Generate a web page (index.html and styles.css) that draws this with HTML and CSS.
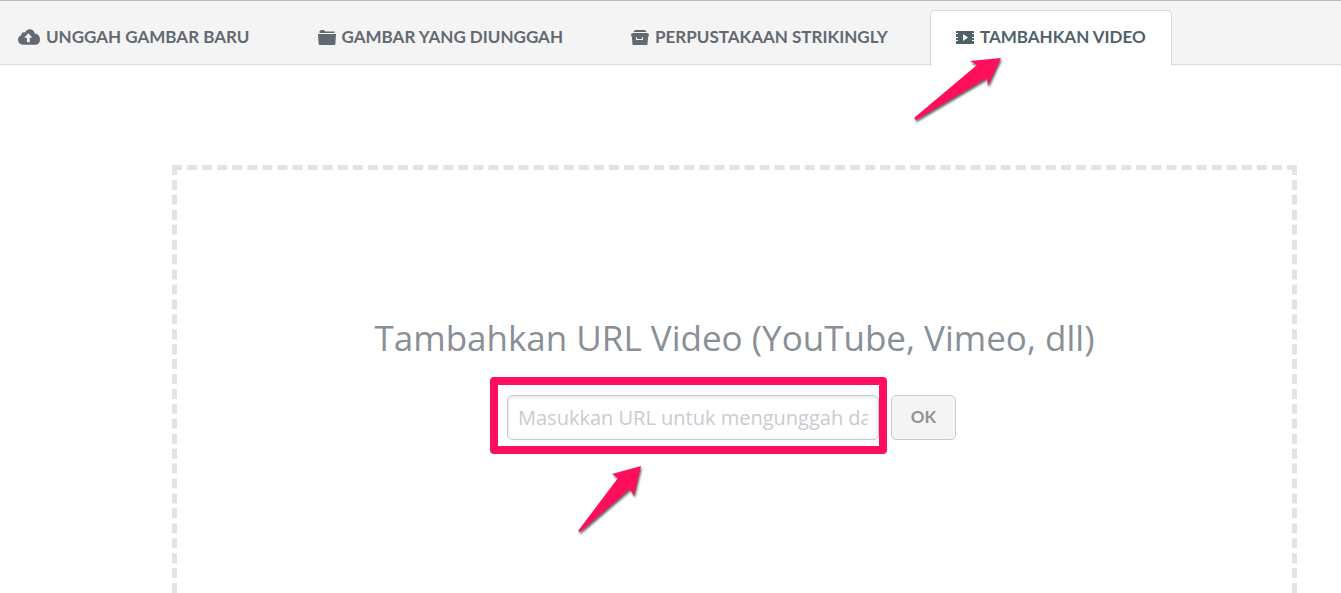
FILE: index.html
```html
<!DOCTYPE html>
<html lang="id">
<head>
<meta charset="utf-8">
<title>Tambahkan Video</title>
<link rel="stylesheet" href="styles.css">
</head>
<body>
<nav class="tabs">
  <a class="tab" href="#unggah">
    <svg class="icon icon-cloud" viewBox="0 0 23 16" aria-hidden="true"><path fill="currentColor" fill-rule="evenodd" d="M5 16a5 5 0 0 1-5-5c0-2.300 1.300-4 3.300-4.700C3.400 4.300 4.700 3 6.400 3c.4 0 .8.100 1.200.2C8.400 1.200 10 0 12.200 0c2.800 0 5 2 5.300 4.700C20.700 4.500 23 7.200 23 10.500c0 3.200-2 5.500-5 5.500zM10.800 4 6.500 8.700h2.800v4.800h3V8.700h2.800z"/></svg>
    <span>UNGGAH GAMBAR BARU</span>
  </a>
  <a class="tab" href="#gambar">
    <svg class="icon" viewBox="0 0 18 16" aria-hidden="true"><path fill="currentColor" d="M1.500 4V2L3 1h3l1.500 1.500h9V4z"/><path fill="currentColor" d="M0 5h18l-.6 10-.8 1H1.400l-.8-1z"/></svg>
    <span>GAMBAR YANG DIUNGGAH</span>
  </a>
  <a class="tab" href="#perpustakaan">
    <svg class="icon" viewBox="0 0 18 16" aria-hidden="true"><path fill="currentColor" d="M4 1h10l1.500 2h-13z"/><path fill="currentColor" fill-rule="evenodd" d="M0 5l2-1h14l2 1-.3 2H.3zM.7 7h16.600l-.9 9H1.600zM5 8v3h7V8h-1v2H6V8z"/></svg>
    <span>PERPUSTAKAAN STRIKINGLY</span>
  </a>
  <a class="tab tab-active" href="#video" aria-current="page">
    <svg class="icon" viewBox="0 0 18 16" aria-hidden="true"><path fill="currentColor" fill-rule="evenodd" d="M0 2h18v2h-2v1h2v3h-2v1h2v2h-2v1h2v3H0v-3h2v-1H0V9h2V8H0V5h2V4H0zM7 5v7l5-3.500z"/></svg>
    <span>TAMBAHKAN VIDEO</span>
    <svg class="pointer pointer-tab" viewBox="0 0 90 66" aria-hidden="true"><path fill="#ff0f5b" d="M88 1 75 29 74 21 3 63 1 61 64 8 57 4z"/></svg>
  </a>
</nav>
<main class="dropzone">
  <h1 class="title"><label for="url">Tambahkan URL Video (YouTube, Vimeo, dll)</label></h1>
  <form class="url-form">
    <div class="field">
      <input class="url-input" id="url" type="text" placeholder="Masukkan URL untuk mengunggah dari web">
      <div class="highlight"></div>
      <svg class="pointer pointer-field" viewBox="0 0 66 70" aria-hidden="true"><path fill="#ff0f5b" d="M64 1 57 31 53 24 3 67 1 66 41 13 35 9z"/></svg>
    </div>
    <button class="ok" type="button">OK</button>
  </form>
</main>
</body>
</html>
```
FILE: styles.css
```css
* {
  box-sizing: border-box;
}

body {
  display: flex;
  flex-direction: column;
  height: 100vh;
  margin: 0;
  background: #fff;
  font-family: "Open Sans", sans-serif;
  overflow: hidden;
}

.tabs {
  display: flex;
  flex: none;
  gap: 16px;
  height: 65px;
  padding: 9px 0 0;
  margin: 0;
  background: #f4f4f4;
  border-top: 1px solid #bbb;
  border-bottom: 1px solid #d8d9da;
}

.tab {
  position: relative;
  display: flex;
  flex: none;
  align-items: center;
  gap: 6px;
  height: 56px;
  padding: 0 25px 4px;
  border: 1px solid transparent;
  border-bottom: 0;
  border-radius: 5px 5px 0 0;
  color: #636972;
  font: bold 17px/24px Lato, sans-serif;
  text-decoration: none;
  white-space: nowrap;
}

.tab:first-child {
  margin-left: -8px;
}

.tab-active {
  background: #fff;
  border-color: #d8d9da;
  color: #50616b;
}

.icon {
  width: 18px;
  height: 16px;
}

.icon-cloud {
  width: 22px;
}

.pointer {
  position: absolute;
  z-index: 1;
  filter: drop-shadow(1px 2px 1px rgba(0, 0, 0, 0.6));
}

.pointer-tab {
  top: 46px;
  left: -18px;
  width: 90px;
}

.dropzone {
  flex: 1;
  margin: 100px 44px 0 172px;
  padding: 144px 20px 0;
  border: 5px dashed #e2e3e7;
  border-bottom: 0;
}

.title {
  margin: 0;
  color: #888f97;
  font-size: 35px;
  font-weight: normal;
  line-height: 48px;
  text-align: center;
}

.url-form {
  display: flex;
  justify-content: center;
  gap: 12px;
  margin-top: 33px;
  padding-right: 6px;
}

.field {
  position: relative;
}

.url-input {
  display: block;
  width: 372px;
  height: 45px;
  padding: 0 10px;
  border: 1px solid #c8cacd;
  border-radius: 5px;
  box-shadow: inset 0 1px 4px rgba(0, 0, 0, 0.13);
  background: #fff;
  color: #636972;
  font: 20px/28px "Open Sans", sans-serif;
}

.url-input::placeholder {
  color: #c8cbd0;
  opacity: 1;
}

.highlight {
  position: absolute;
  inset: -18px -8px -14px -17px;
  border: 8px solid #ff0f5b;
  border-radius: 4px;
  pointer-events: none;
}

.pointer-field {
  top: 70px;
  left: 70px;
  width: 66px;
}

.ok {
  width: 65px;
  height: 45px;
  padding: 0 0 2px;
  border: 1px solid #c8cacd;
  border-radius: 5px;
  background: #f4f4f4;
  color: #8f9295;
  font: bold 17px/24px Lato, sans-serif;
}
```
